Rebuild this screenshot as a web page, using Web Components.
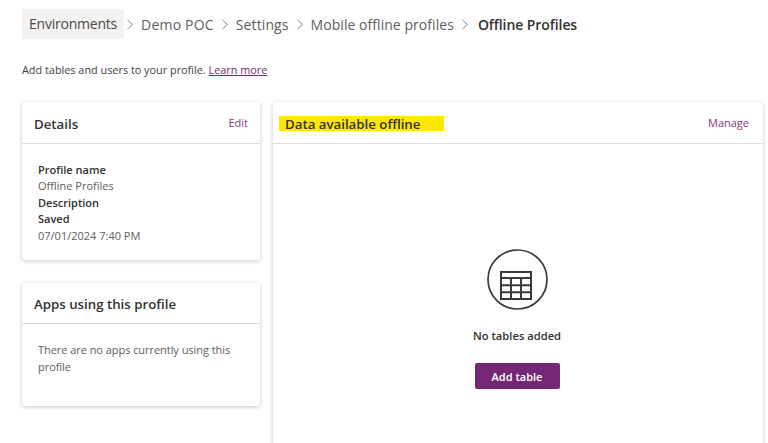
<!DOCTYPE html>
<html>
<head>
<meta charset="utf-8">
<style>
  html, body { margin: 0; height: 100%; background: #fff; overflow: hidden; }
  body { font-family: "Open Sans", "Noto Sans", sans-serif; color: #323130; }
</style>
</head>
<body>
<profile-page>
  <bread-crumbs slot="crumbs">
    <span class="first">Environments</span>
    <span style="letter-spacing:.2px">Demo POC</span>
    <span style="letter-spacing:.1px">Settings</span>
    <span style="letter-spacing:.05px">Mobile offline profiles</span>
    <span class="last">Offline Profiles</span>
  </bread-crumbs>
  <span slot="intro">Add tables and users to your profile. <a href="#">Learn more</a></span>
  <info-card slot="left" heading="Details" action="Edit" style="height:158px">
    <b>Profile name</b>
    <div>Offline Profiles</div>
    <b>Description</b>
    <b>Saved</b>
    <div>07/01/2024 7:40 PM</div>
  </info-card>
  <info-card slot="left" heading="Apps using this profile" compact style="height:123px">
    <div style="letter-spacing:-.05px;line-height:17px">There are no apps currently using this profile</div>
  </info-card>
  <data-card slot="right"></data-card>
</profile-page>

<script>
class ProfilePage extends HTMLElement {
  connectedCallback() {
    this.attachShadow({ mode: 'open' });
    this.shadowRoot.innerHTML = `
      <style>
        :host { display: block; padding: 9px 5px 0 22px; height: 443px; box-sizing: border-box; overflow: hidden; }
        .intro { margin-top: 22px; height: 18px; line-height: 18px; font-size: 10.87px; color: #424242; }
        ::slotted(span) { color: #424242; }
        .cols { display: grid; grid-template-columns: 238px 490px; column-gap: 13px; margin-top: 23px; align-items: start; }
        .left { display: flex; flex-direction: column; gap: 23px; }
      </style>
      <slot name="crumbs"></slot>
      <div class="intro"><slot name="intro"></slot></div>
      <div class="cols">
        <div class="left"><slot name="left"></slot></div>
        <slot name="right"></slot>
      </div>
    `;
    const link = this.querySelector('[slot=intro] a');
    link.style.color = '#742774';
  }
}

class BreadCrumbs extends HTMLElement {
  connectedCallback() {
    this.attachShadow({ mode: 'open' });
    this.shadowRoot.innerHTML = `
      <style>
        :host { display: flex; align-items: center; height: 30px; font-size: 14px; color: #605e5c; }
        ::slotted(span) { display: inline-block; white-space: nowrap; }
        ::slotted(.first) { background: #f3f2f1; color: #4a4846; padding: 0 7px; line-height: 30px;
          letter-spacing: -.22px; margin-right: -5px; }
        ::slotted(.last) { color: #323130; font-weight: 600; letter-spacing: -.08px; margin-left: 2px; }
        svg { width: 8px; height: 11px; margin: 0 7px; flex: none; }
      </style>
      <div id="row" style="display:contents"></div>
    `;
    const row = this.shadowRoot.getElementById('row');
    const spans = [...this.children];
    spans.forEach((s, i) => {
      s.slot = 's' + i;
      const slot = document.createElement('slot');
      slot.name = 's' + i;
      row.appendChild(slot);
      if (i < spans.length - 1) {
        row.insertAdjacentHTML('beforeend',
          '<svg viewBox="0 0 8 11"><path d="M1.5 1 L6.5 5.5 L1.5 10" fill="none" stroke="#8a8886" stroke-width="1"/></svg>');
      }
    });
  }
}

const cardStyle = `
  :host { display: block; box-sizing: border-box; background: #fff; border-radius: 3px;
    box-shadow: 0 1px 4px rgba(0,0,0,.22); overflow: hidden; }
  header { display: flex; justify-content: space-between; align-items: center; box-sizing: border-box;
    height: 42px; border-bottom: 1px solid #dcdcdc; padding: 0 12px; }
  h2 { margin: 2px 0 0; font-size: 13.25px; font-weight: 600; color: #323130; }
  a { color: #7f3a80; font-size: 11px; text-decoration: none; }
`;

class InfoCard extends HTMLElement {
  connectedCallback() {
    const action = this.getAttribute('action');
    const compact = this.hasAttribute('compact');
    this.attachShadow({ mode: 'open' });
    this.shadowRoot.innerHTML = `
      <style>
        ${cardStyle}
        header { height: ${compact ? 41 : 42}px; }
        .body { padding: ${compact ? 17 : 18}px 16px 0; font-size: 11px; line-height: 16.4px; color: #605e5c; }
        ::slotted(b) { display: block; color: #323130; font-weight: 600; }
      </style>
      <header>
        <h2>${this.getAttribute('heading')}</h2>
        ${action ? `<a href="#" style="margin-top:-1px">${action}</a>` : ''}
      </header>
      <div class="body"><slot></slot></div>
    `;
  }
}

class DataCard extends HTMLElement {
  connectedCallback() {
    this.attachShadow({ mode: 'open' });
    this.shadowRoot.innerHTML = `
      <style>
        ${cardStyle}
        :host { height: 400px; }
        header { padding: 0 14px 0 6px; }
        h2 { background: #ffe800; padding: 1px 24px 0 6px; box-sizing: border-box; height: 15px; line-height: 15px; margin: 2px 0 0; }
        a { margin-top: -1px; }
        .empty { display: flex; flex-direction: column; align-items: center; padding: 105px 2px 0 0; }
        svg { display: block; width: 61px; height: 61px; }
        p { margin: 18px 0 0; font-size: 11.2px; font-weight: 600; line-height: 16px; color: #323130; }
        button { margin-top: 19px; width: 85px; height: 26px; border: 0; border-radius: 2px; background: #742774;
          color: #fff; font: 600 11px "Open Sans", sans-serif; }
      </style>
      <header>
        <h2>Data available offline</h2>
        <a href="#">Manage</a>
      </header>
      <div class="empty">
        <svg viewBox="0 0 61 61">
          <circle cx="30.5" cy="30.5" r="29.5" fill="none" stroke="#3b3a39" stroke-width="1.7"/>
          <g fill="none" stroke="#3b3a39" stroke-width="2">
            <rect x="14" y="23" width="30" height="27"/>
            <path d="M14 29H44M14 36.3H44M14 43.3H44M24 29V50M34 29V50"/>
          </g>
        </svg>
        <p>No tables added</p>
        <button>Add table</button>
      </div>
    `;
  }
}

customElements.define('profile-page', ProfilePage);
customElements.define('bread-crumbs', BreadCrumbs);
customElements.define('info-card', InfoCard);
customElements.define('data-card', DataCard);
</script>
</body>
</html>
